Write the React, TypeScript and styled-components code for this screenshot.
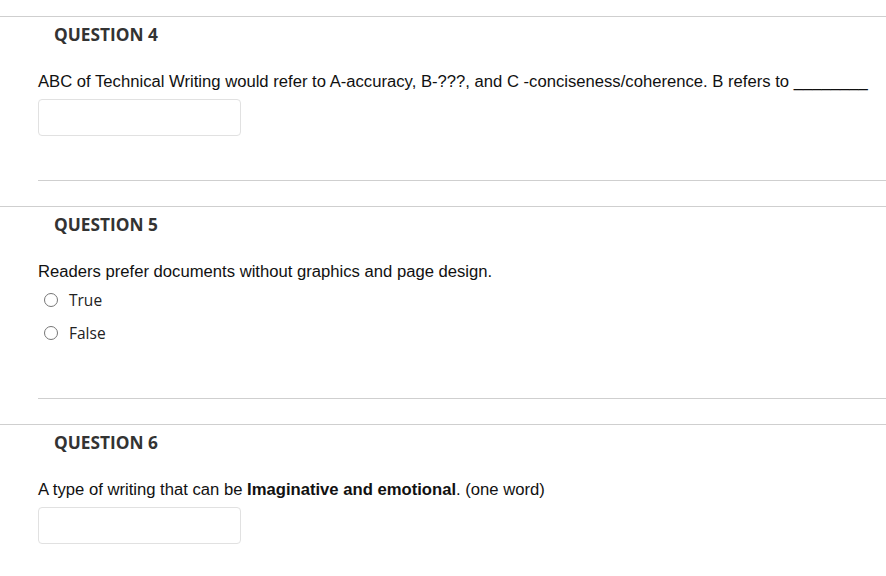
import React from "react";
import styled, { createGlobalStyle } from "styled-components";

const Global = createGlobalStyle`
  html, body { margin: 0; padding: 0; background: #fff; }
  body { font-family: Arial, "Liberation Sans", sans-serif; color: #111; }
`;

const Page = styled.div`
  padding-top: 16px;
  width: 886px;
  overflow: hidden;
`;

const Section = styled.section`
  border-top: 1px solid #cfcfcf;
  padding: 6px 0 0 38px;
`;

const Heading = styled.h3`
  margin: 0 0 25px 16px;
  font-family: "Open Sans", sans-serif;
  font-weight: 700;
  font-size: 17.3px;
  line-height: 24px;
  color: #333;
`;

const Prompt = styled.p`
  margin: 0;
  font-family: Arial, "Liberation Sans", sans-serif;
  font-size: 16.65px;
  line-height: 20px;
  color: #111;
  white-space: nowrap;
`;

const TextInput = styled.input<{ $after: number }>`
  display: block;
  box-sizing: border-box;
  width: 203px;
  height: 37px;
  margin: 7px 0 ${(p) => p.$after}px 0;
  border: 1px solid #e1e1e1;
  border-radius: 4px;
  background: #fff;
  outline: none;
`;

const Options = styled.div<{ $after: number }>`
  margin: 2px 0 ${(p) => p.$after}px 0;
  display: flex;
  flex-direction: column;
`;

const Option = styled.label`
  display: flex;
  align-items: center;
  height: 32.5px;
  padding-left: 6px;
  gap: 11px;
  font-family: "Open Sans", sans-serif;
  font-size: 15.5px;
  color: #222;
  cursor: pointer;
`;

const Radio = styled.span`
  box-sizing: border-box;
  width: 14px;
  height: 14px;
  border: 1px solid #767676;
  border-radius: 50%;
  background: #fff;
  flex: none;
`;

const Divider = styled.hr`
  margin: 0 0 25px 0;
  border: 0;
  border-top: 1px solid #cfcfcf;
  height: 0;
`;

export default function App() {
  return (
    <>
      <Global />
      <Page>
        <Section>
          <Heading>QUESTION 4</Heading>
          <Prompt>
            ABC of Technical Writing would refer to A-accuracy, B-???, and C
            -conciseness/coherence. B refers to ________
          </Prompt>
          <TextInput type="text" $after={44} />
          <Divider />
        </Section>
        <Section>
          <Heading>QUESTION 5</Heading>
          <Prompt>Readers prefer documents without graphics and page design.</Prompt>
          <Options $after={49}>
            <Option>
              <Radio />
              True
            </Option>
            <Option>
              <Radio />
              False
            </Option>
          </Options>
          <Divider />
        </Section>
        <Section>
          <Heading>QUESTION 6</Heading>
          <Prompt>
            A type of writing that can be <b>Imaginative and emotional</b>. (one
            word)
          </Prompt>
          <TextInput type="text" $after={34} />
        </Section>
      </Page>
    </>
  );
}
